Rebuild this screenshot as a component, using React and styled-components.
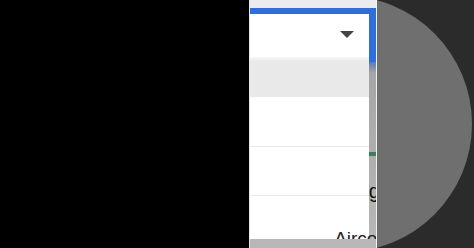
import { createGlobalStyle, styled } from "styled-components";

const GlobalStyle = createGlobalStyle`
  html, body {
    margin: 0;
    padding: 0;
    background: #000;
    font-family: "Liberation Sans", Arial, sans-serif;
  }
`;

const Frame = styled.div`
  display: flex;
  width: 474px;
  height: 248px;
  overflow: hidden;
`;

const Blank = styled.div`
  width: 249px;
  background: #000;
`;

const Screen = styled.div`
  position: relative;
  width: 126px;
  border-left: 1px solid #e6e6e8;
  border-right: 1px solid #f2f2f2;
  display: flex;
  flex-direction: column;
  overflow: hidden;
  background: #acacac;
`;

const StatusStrip = styled.div`
  height: 8px;
  background: #ececf0;
`;

const Header = styled.div`
  height: 54px;
  background: #2f6fdc;
`;

const Fade = styled.div`
  height: 12px;
  background: linear-gradient(#5b7bb3, #a9a9a9);
`;

const Content = styled.div`
  flex: 1;
  display: flex;
  flex-direction: column;
  align-items: flex-end;
  background: linear-gradient(#a6a6a6, #b8b8b8);
`;

const GreenMark = styled.div`
  margin-top: 78px;
  width: 10px;
  height: 4px;
  background: #3d7d5c;
`;

const Heading = styled.div`
  margin-top: 24px;
  margin-right: -4px;
  font-size: 20px;
  color: #111;
  white-space: nowrap;
`;

const TextClip = styled.div`
  position: relative;
  z-index: 2;
  margin-top: auto;
  margin-bottom: 9px;
  height: 7px;
  overflow: hidden;
  display: flex;
  justify-content: flex-end;
`;

const FootText = styled.div`
  margin-right: -12px;
  margin-top: -1px;
  font-size: 19px;
  line-height: 16px;
  color: #222;
  white-space: nowrap;
`;

const Menu = styled.div`
  position: absolute;
  top: 14px;
  left: 0;
  width: 119px;
  height: 225px;
  background: #fff;
  border-top-right-radius: 6px;
  display: flex;
  flex-direction: column;
`;

const Row = styled.div`
  height: ${(p) => p.$h}px;
  display: flex;
  align-items: center;
  justify-content: flex-end;
  padding-right: 15px;
  border-bottom: ${(p) => (p.$line ? "1px solid #e8e8e8" : "none")};
  background: ${(p) =>
    p.$active ? "linear-gradient(#f7f7f7, #e9e9e9 12%, #e9e9e9)" : "#fff"};
  box-sizing: border-box;
`;

const Caret = styled.div`
  width: 0;
  height: 0;
  border-left: 7px solid transparent;
  border-right: 7px solid transparent;
  border-top: 7px solid #444;
  margin-top: -2px;
`;

const Side = styled.div`
  width: 97px;
  background: #2b2b2b;
`;

export default function App() {
  return (
    <>
      <GlobalStyle />
      <Frame>
        <Blank />
        <Screen>
          <StatusStrip />
          <Header />
          <Fade />
          <Content>
            <GreenMark />
            <Heading>Settin g</Heading>
            <TextClip>
              <FootText>Aircon</FootText>
            </TextClip>
          </Content>
          <Menu>
            <Row $h={43}>
              <Caret />
            </Row>
            <Row $h={40} $active $line />
            <Row $h={50} $line />
            <Row $h={49} $line />
            <Row $h={43} />
          </Menu>
        </Screen>
        <Side>
          <svg width="97" height="248" viewBox="0 0 97 248">
            <circle cx="-33" cy="124" r="128" fill="#6f6f6f" />
          </svg>
        </Side>
      </Frame>
    </>
  );
}
